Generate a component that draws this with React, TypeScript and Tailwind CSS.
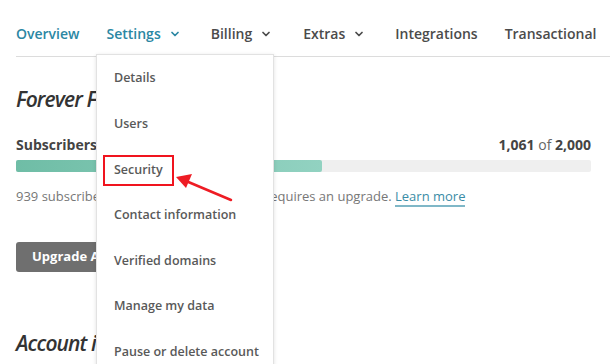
import { ChevronDown } from 'lucide-react';

const menu = [
  'Details',
  'Users',
  'Security',
  'Contact information',
  'Verified domains',
  'Manage my data',
  'Pause or delete account',
];

function NavItem({ label, active, caret, className }: { label: string; active?: boolean; caret?: boolean; className?: string }) {
  return (
    <div className={`flex items-center gap-[8px] ${active ? 'text-[#2b87a3]' : 'text-[#4b4b4b]'} ${className ?? ''}`}>
      <span>{label}</span>
      {caret && <ChevronDown size={12} strokeWidth={3.5} />}
    </div>
  );
}

export default function App() {
  return (
    <div className="relative h-[364px] w-[610px] overflow-hidden bg-white font-['Open_Sans',sans-serif]">
      {/* Tabs */}
      <div className="ml-4 flex h-[57px] items-center border-b border-[#dcdcdc] pt-[11px] text-[14px] font-semibold">
        <NavItem label="Overview" active className="mr-[27px]" />
        <NavItem label="Settings" active caret className="mr-[30px]" />
        <NavItem label="Billing" caret className="mr-[31px]" />
        <NavItem label="Extras" caret className="mr-[30px]" />
        <NavItem label="Integrations" className="mr-[27px]" />
        <NavItem label="Transactional" />
      </div>

      {/* Page body */}
      <div className="px-4 pr-[19px]">
        <h1 className="mt-[26px] text-[21px] italic font-semibold leading-8 tracking-[-0.9px] text-[#333]">Forever Free</h1>

        <div className="mt-[19px] flex items-center justify-between text-[14px] font-semibold text-[#444]">
          <span className="font-bold">Subscribers</span>
          <span>
            <span className="font-bold">1,061</span> <span className="font-normal text-[#666]">of</span>{' '}
            <span className="font-bold">2,000</span>
          </span>
        </div>

        <div className="mt-[5px] h-[12px] w-full rounded-[2px] bg-[#efefef]">
          <div className="h-full w-[53.2%] rounded-[2px] bg-gradient-to-r from-[#6fbda6] to-[#92d2c1]" />
        </div>

        <p className="mt-[15px] text-[13px] text-[#777]">
          939 subscribers remaining. Adding more requires an upgrade.{' '}
          <a className="border-b-2 border-[#7fb7c7] font-medium text-[#3a8ca6]">Learn more</a>
        </p>

        <button className="mt-[35px] h-[30px] rounded-[3px] bg-[#6f6f6f] px-4 text-[13px] font-bold text-white">
          Upgrade Account
        </button>

        <h2 className="mt-[56px] text-[21px] italic font-semibold tracking-[-0.9px] text-[#333]">Account info</h2>
      </div>

      {/* Settings dropdown */}
      <div className="absolute left-[96px] top-[54px] w-[178px] border border-[#e2e2e2] bg-white pt-px shadow-[0_1px_4px_rgba(0,0,0,0.12)]">
        {menu.map((m) => (
          <div key={m} className="relative flex h-[45.6px] items-center pl-[17px] text-[12.5px] font-semibold text-[#595959]">
            {m}
            {m === 'Security' && (
              <div className="absolute left-[6px] top-[8px] h-[31px] w-[71px] border-2 border-[#f0141e]" />
            )}
          </div>
        ))}
      </div>

      {/* Annotation arrow */}
      <svg className="pointer-events-none absolute left-0 top-0" width="610" height="364">
        <line x1="231" y1="200" x2="186" y2="181" stroke="#ee1c24" strokeWidth="2.5" strokeLinecap="round" />
        <polygon points="176,177 192,174 186,188" fill="#ee1c24" />
      </svg>
    </div>
  );
}
